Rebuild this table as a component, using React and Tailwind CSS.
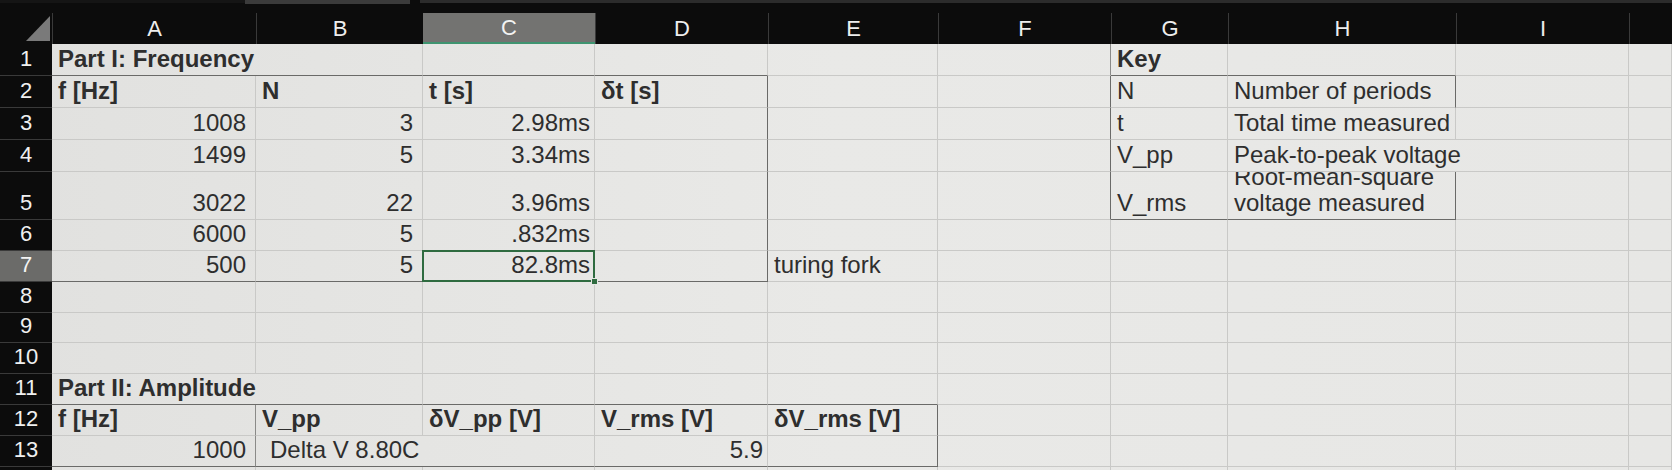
import React from 'react';

const base =
  'flex items-end overflow-hidden whitespace-nowrap border-r border-b border-[#c9c9c7] px-[6px] pb-[3px] text-[#2e2e2e]';

// one entry per column A..J, null entries are skipped (covered by a col-span)
const rows = [
  [
    { t: 'Part I: Frequency', c: 'col-span-2 font-bold text-[#1c1c1c] border-b-[#6a6a68]' },
    null,
    { c: 'border-b-[#6a6a68]' },
    { c: 'border-b-[#6a6a68]' },
    {},
    { c: 'border-r-[#8a8a88]' },
    { t: 'Key', c: 'font-bold text-[#1c1c1c] border-b-[#6a6a68]' },
    { c: 'border-b-[#6a6a68]' },
    {},
    {},
  ],
  [
    { t: 'f [Hz]', c: 'font-bold text-[#1c1c1c]' },
    { t: 'N', c: 'font-bold text-[#1c1c1c]' },
    { t: 't [s]', c: 'font-bold text-[#1c1c1c]' },
    { t: 'δt [s]', c: 'font-bold text-[#1c1c1c] border-r-[#6a6a68]' },
    {},
    { c: 'border-r-[#6a6a68]' },
    { t: 'N' },
    { t: 'Number of periods', c: 'border-r-[#6a6a68]' },
    {},
    {},
  ],
  [
    { t: '1008', c: 'justify-end pr-[9px]' },
    { t: '3', c: 'justify-end pr-[9px]' },
    { t: '2.98ms', c: 'justify-end pr-[4px]' },
    { c: 'border-r-[#6a6a68]' },
    {},
    { c: 'border-r-[#6a6a68]' },
    { t: 't' },
    { t: 'Total time measured' },
    {},
    {},
  ],
  [
    { t: '1499', c: 'justify-end pr-[9px]' },
    { t: '5', c: 'justify-end pr-[9px]' },
    { t: '3.34ms', c: 'justify-end pr-[4px]' },
    { c: 'border-r-[#6a6a68]' },
    {},
    { c: 'border-r-[#6a6a68]' },
    { t: 'V_pp' },
    { t: 'Peak-to-peak voltage', c: 'col-span-2' },
    null,
    {},
  ],
  [
    { t: '3022', c: 'justify-end pr-[9px]' },
    { t: '22', c: 'justify-end pr-[9px]' },
    { t: '3.96ms', c: 'justify-end pr-[4px]' },
    { c: 'border-r-[#6a6a68]' },
    {},
    { c: 'border-r-[#6a6a68]' },
    { t: 'V_rms', c: 'border-b-[#6a6a68]' },
    { wrap: true, c: 'border-b-[#6a6a68] border-r-[#6a6a68] pb-0' },
    {},
    {},
  ],
  [
    { t: '6000', c: 'justify-end pr-[9px]' },
    { t: '5', c: 'justify-end pr-[9px]' },
    { t: '.832ms', c: 'justify-end pr-[4px]' },
    { c: 'border-r-[#6a6a68]' },
    {},
    {},
    {},
    {},
    {},
    {},
  ],
  [
    { t: '500', c: 'justify-end pr-[9px] border-b-[#6a6a68]' },
    { t: '5', c: 'justify-end pr-[9px] border-b-[#6a6a68]' },
    { t: '82.8ms', sel: true, c: 'justify-end pr-[4px] border-b-[#6a6a68]' },
    { c: 'border-r-[#6a6a68] border-b-[#6a6a68]' },
    { t: 'turing fork' },
    {},
    {},
    {},
    {},
    {},
  ],
  [{}, {}, {}, {}, {}, {}, {}, {}, {}, {}],
  [{}, {}, {}, {}, {}, {}, {}, {}, {}, {}],
  [{}, {}, {}, {}, {}, {}, {}, {}, {}, {}],
  [
    { t: 'Part II: Amplitude', c: 'col-span-2 font-bold text-[#1c1c1c] border-b-[#6a6a68]' },
    null,
    { c: 'border-b-[#6a6a68]' },
    { c: 'border-b-[#6a6a68]' },
    { c: 'border-b-[#6a6a68]' },
    {},
    {},
    {},
    {},
    {},
  ],
  [
    { t: 'f [Hz]', c: 'font-bold text-[#1c1c1c] border-r-[#8a8a88]' },
    { t: 'V_pp', c: 'font-bold text-[#1c1c1c]' },
    { t: 'δV_pp [V]', c: 'font-bold text-[#1c1c1c]' },
    { t: 'V_rms [V]', c: 'font-bold text-[#1c1c1c]' },
    { t: 'δV_rms [V]', c: 'font-bold text-[#1c1c1c] border-r-[#6a6a68]' },
    {},
    {},
    {},
    {},
    {},
  ],
  [
    { t: '1000', c: 'justify-end pr-[9px] border-b-[#6a6a68] border-r-[#8a8a88]' },
    { t: 'Delta V 8.80C', c: 'col-span-2 pl-[14px] border-b-[#6a6a68]' },
    null,
    { t: '5.9', c: 'justify-end pr-[4px] border-b-[#6a6a68]' },
    { c: 'border-r-[#6a6a68] border-b-[#6a6a68]' },
    {},
    {},
    {},
    {},
    {},
  ],
  [{}, {}, {}, {}, {}, {}, {}, {}, {}, {}],
];

const letters = ['A', 'B', 'C', 'D', 'E', 'F', 'G', 'H', 'I', ''];

function Cell({ cell }) {
  if (cell.sel) {
    return (
      <div className={`${base} ${cell.c || ''} relative overflow-visible z-10`}>
        {cell.t}
        <div className="absolute -left-px -top-px -right-px -bottom-px border-2 border-[#2f6b40]" />
        <div className="absolute -right-[4px] -bottom-[4px] size-[7px] bg-[#2f6b40] border border-[#e6e6e4]" />
      </div>
    );
  }
  if (cell.wrap) {
    // wrapped text taller than the row, top line gets clipped like in Excel
    return (
      <div className={`${base} ${cell.c || ''}`}>
        <div className="leading-[26px]">
          Root-mean-square
          <br />
          voltage measured
        </div>
      </div>
    );
  }
  return <div className={`${base} ${cell.c || ''}`}>{cell.t}</div>;
}

export default function App() {
  return (
    <div className="w-[1672px] h-[470px] overflow-hidden bg-[#0c0c0c] font-['Liberation_Sans',Arial,sans-serif] text-[24px] leading-[26px]">
      {/* strip above the column letters */}
      <div className="h-[13px] flex items-start">
        <div className="w-[245px] h-[3px] bg-[#151515]" />
        <div className="w-[165px] h-[4px] bg-[#3b3b3b]" />
        <div className="w-[10px]" />
        <div className="flex-1 h-[3px] bg-[#2c2c2c]" />
      </div>

      <div className="grid h-[457px] grid-cols-[52px_204px_167px_172px_173px_170px_173px_117px_228px_173px_1fr] grid-rows-[31px_32px_32px_32px_32px_48px_31px_31px_31px_30px_31px_31px_31px_31px_1fr] bg-gradient-to-r from-[#e1e1df] via-[#e9e9e7] to-[#e7e7e5]">
        {/* header row */}
        <div className="bg-[#0c0c0c] flex items-end justify-end pr-[2px] pb-[3px]">
          <svg width="24" height="25" viewBox="0 0 24 25">
            <polygon points="24,0 24,25 0,25" fill="#7a7a7a" />
          </svg>
        </div>
        {letters.map((l, i) => (
          <div
            key={i}
            className={
              l === 'C'
                ? 'flex items-center justify-center text-[22px] bg-[#737371] text-[#f2f2f2] border-b-2 border-[#3f9470]'
                : 'flex items-center justify-center text-[22px] bg-[#0c0c0c] text-[#eeeeee] border-l border-[#3a3a3a]'
            }
          >
            {l}
          </div>
        ))}

        {rows.map((row, r) => (
          <React.Fragment key={r}>
            <div
              className={
                r === 6
                  ? 'flex items-end justify-center pb-[3px] text-[22px] bg-[#6b6b69] text-[#f4f4f4] border-b border-[#3a3a3a]'
                  : 'flex items-end justify-center pb-[3px] text-[22px] bg-[#0c0c0c] text-[#f0f0f0] border-b border-[#3a3a3a]'
              }
            >
              {r < 13 ? r + 1 : ''}
            </div>
            {row.map((cell, i) => (cell ? <Cell key={i} cell={cell} /> : null))}
          </React.Fragment>
        ))}
      </div>
    </div>
  );
}
